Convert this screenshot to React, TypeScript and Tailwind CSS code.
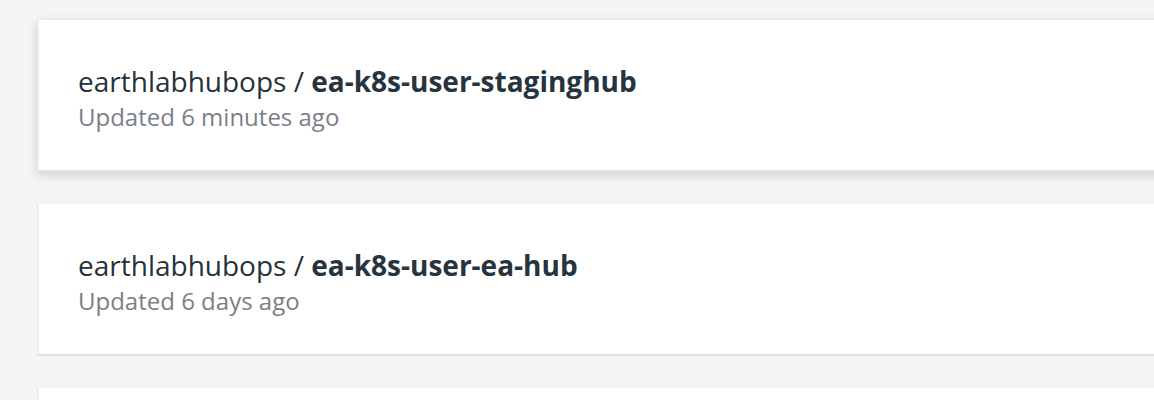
import React from "react";

const repos = [
  { ns: "earthlabhubops", name: "ea-k8s-user-staginghub", updated: "Updated 6 minutes ago", hover: true },
  { ns: "earthlabhubops", name: "ea-k8s-user-ea-hub", updated: "Updated 6 days ago", hover: false },
];

const card = "h-[152px] bg-white border-l-2 border-l-[#ececec] border-b-2 border-b-[#dfe3e6] pl-[39px] pt-[43px]";

export default function App() {
  return (
    <main
      className="h-[400px] overflow-hidden bg-[#f5f5f5] pt-5 pl-[37px]"
      style={{ fontFamily: '"Open Sans", "Liberation Sans", sans-serif' }}
    >
      <div className="flex flex-col gap-8 w-[1200px]">
        {repos.map((r) => (
          <div
            key={r.name}
            className={r.hover ? card + " shadow-[0_3px_10px_rgba(0,0,0,0.16)]" : card}
          >
            <div className="text-[28px] leading-[36px] text-[#26323a] whitespace-nowrap">
              {r.ns} / <span className="font-bold text-[#263440]">{r.name}</span>
            </div>
            <div className="text-[24px] leading-[36px] text-[#7a8087] whitespace-nowrap">{r.updated}</div>
          </div>
        ))}
        {/* next repo row, only its top edge is in view */}
        <div className={card} />
      </div>
    </main>
  );
}
